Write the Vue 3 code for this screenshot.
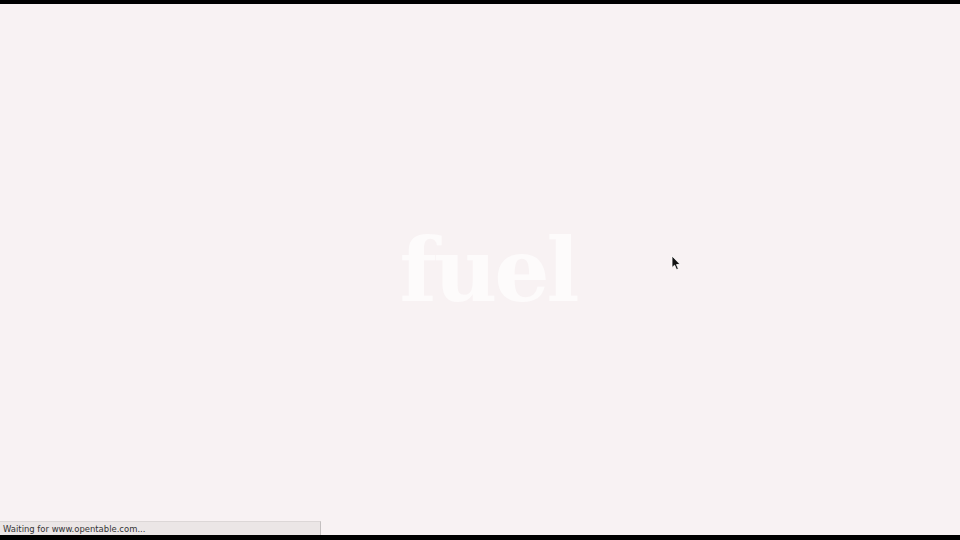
<script setup>
const statusText = 'Waiting for www.opentable.com...'
</script>

<template>
  <div class="screen">
    <div class="bar-top"></div>
    <main class="page">
      <h1 class="logo">fuel</h1>
      <svg class="cursor" width="10" height="16" viewBox="0 0 10 16">
        <path d="M1 1 L1 12.5 L3.6 10.2 L5.5 14.6 L7.4 13.8 L5.5 9.6 L9 9.3 Z" fill="#111" stroke="#fff" stroke-width="0.8" />
      </svg>
      <div class="status">{{ statusText }}</div>
    </main>
    <div class="bar-bottom"></div>
  </div>
</template>

<style scoped>
.screen {
  display: flex;
  flex-direction: column;
  width: 960px;
  height: 540px;
  overflow: hidden;
  background: #000;
}

.bar-top {
  height: 4px;
  background: #000;
}

.bar-bottom {
  height: 5px;
  background: #000;
}

.page {
  position: relative;
  flex: 1;
  display: flex;
  justify-content: center;
  align-items: center;
  background: #f8f2f3;
}

.logo {
  margin: 2px 0 0 16px;
  font-family: "DejaVu Serif", serif;
  font-size: 87px;
  font-weight: 700;
  line-height: 1;
  letter-spacing: -3px;
  color: #fdfbfb;
  filter: blur(0.6px);
}

.cursor {
  position: absolute;
  left: 671px;
  top: 251px;
  filter: blur(0.3px);
}

.status {
  position: absolute;
  left: 0;
  bottom: 0;
  box-sizing: border-box;
  width: 321px;
  height: 14px;
  padding: 1px 0 0 3px;
  background: #ebe6e6;
  border-top: 1px solid #dcd7d7;
  border-right: 1px solid #c4c0c0;
  font-family: "DejaVu Sans", sans-serif;
  font-size: 8.45px;
  line-height: 12px;
  color: #333;
}
</style>
